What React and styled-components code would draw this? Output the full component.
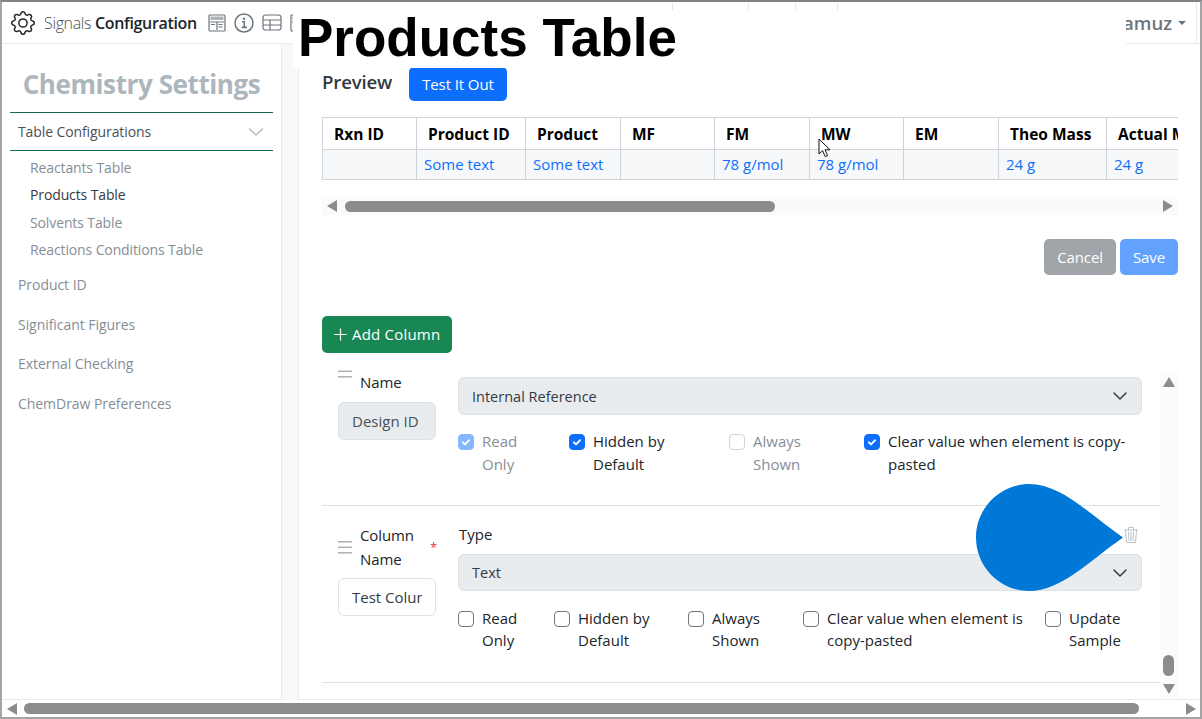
import React from 'react';
import styled, { createGlobalStyle } from 'styled-components';
import { ChevronDown, Plus } from 'lucide-react';
import { BsGear, BsTrash3 } from 'react-icons/bs';

const Global = createGlobalStyle`
  html, body { margin: 0; padding: 0; background: #fff; }
  body { font-family: "Open Sans", "Noto Sans", sans-serif; font-size: 15px; color: #212529; }
  * { box-sizing: border-box; }
`;

const Frame = styled.div`
  position: relative;
  width: 1202px;
  height: 719px;
  display: flex;
  flex-direction: column;
  overflow: hidden;
  background: #fff;
  border-top: 2px solid #7f8386;
  border-left: 2px solid #a3a5a7;
  border-right: 2px solid #a3a5a7;
  border-bottom: 2px solid #a3a5a7;
`;

const Header = styled.header`
  height: 42px;
  flex: none;
  display: flex;
  align-items: center;
  padding-left: 9px;
  border-bottom: 1px solid #e9ecef;
  color: #212529;
`;

const Brand = styled.div`
  margin-left: 9px;
  font-size: 16px;
  letter-spacing: -0.35px;
  color: #495057;
  font-weight: 300;
  b { color: #212529; font-weight: 600; }
`;

const IconRow = styled.div`
  display: flex;
  align-items: center;
  gap: 8px;
  margin-left: 11px;
  color: #6c757d;
`;

const UserMenu = styled.div`
  margin-left: auto;
  margin-right: 3px;
  padding-right: 10px;
  align-self: stretch;
  display: flex;
  align-items: center;
  gap: 6px;
  font-size: 18.5px;
  font-weight: 600;
  color: #6c757d;
  border-right: 1px solid #e9ecef;
  &::after {
    content: '';
    border-top: 4px solid #6c757d;
    border-left: 4px solid transparent;
    border-right: 4px solid transparent;
  }
`;

const TitleOverlay = styled.div`
  position: absolute;
  left: 291px;
  top: -2px;
  width: 833px;
  height: 68px;
  padding-left: 5px;
  background: #fff;
  font-family: "Liberation Sans", Arial, sans-serif;
  font-weight: 700;
  font-size: 53px;
  line-height: 76px;
  color: #000;
`;

const Tick = styled.span`
  position: absolute;
  top: 2px;
  left: ${p => p.$x}px;
  width: 1px;
  height: 6px;
  background: #e3e4e6;
`;

const Body = styled.div`
  flex: 1;
  min-height: 0;
  display: flex;
`;

const Sidebar = styled.aside`
  width: 280px;
  flex: none;
  padding: 0 8px;
  border-right: 1px solid #e9ecef;
  border-bottom: 1px solid #e9ecef;
`;

const SideTitle = styled.h1`
  margin: 22px 0 10px;
  text-align: center;
  font-size: 26px;
  line-height: 36px;
  font-weight: 700;
  letter-spacing: -0.4px;
  color: #adb5bd;
`;

const AccordionHead = styled.div`
  height: 39px;
  padding: 0 4px 0 8px;
  display: flex;
  align-items: center;
  justify-content: space-between;
  border-top: 1px solid #146c43;
  border-bottom: 1px solid #146c43;
  font-size: 14px;
  letter-spacing: -0.1px;
  color: #495057;
  svg { color: #adb5bd; }
`;

const SubList = styled.div`
  padding: 3px 0 0 20px;
  margin-bottom: 2px;
`;

const SubItem = styled.div`
  height: 27.3px;
  line-height: 27px;
  font-size: 14px;
  letter-spacing: -0.12px;
  color: ${p => (p.$active ? '#343a40' : '#868e96')};
`;

const SideLink = styled.div`
  height: 39.6px;
  line-height: 39px;
  padding-left: 8px;
  font-size: 14px;
  letter-spacing: -0.05px;
  color: #868e96;
`;

const Gutter = styled.div`
  width: 16px;
  flex: none;
  background: #f8f9fa;
`;

const Main = styled.main`
  flex: 1;
  min-width: 0;
  padding: 23px 22px 0 23px;
  display: flex;
  flex-direction: column;
  border-left: 1px solid #e9ecef;
  border-bottom: 1px solid #e9ecef;
`;

const PreviewRow = styled.div`
  display: flex;
  align-items: flex-start;
  gap: 17px;
  height: 50px;
`;

const PreviewTitle = styled.h2`
  margin: 0;
  font-size: 18.7px;
  line-height: 29px;
  font-weight: 600;
  letter-spacing: -0.2px;
  color: #343a40;
`;

const Btn = styled.button`
  height: ${p => p.$h || 34}px;
  padding: 0 ${p => p.$px || 13}px 1px;
  border: 0;
  border-radius: 5px;
  font: inherit;
  font-size: 15px;
  letter-spacing: -0.1px;
  color: #fff;
  background: ${p => p.$bg};
  display: inline-flex;
  align-items: center;
  justify-content: center;
  gap: 2px;
  svg { margin-left: -3px; }
`;

const AddBtn = styled(Btn)`
  letter-spacing: 0.2px;
`;

const TableClip = styled.div`
  overflow: hidden;
  height: 63px;
`;

const PreviewTable = styled.table`
  border-collapse: collapse;
  table-layout: fixed;
  width: 904px;
  font-size: 15px;
  th, td {
    border: 1px solid #ced4da;
    text-align: left;
    white-space: nowrap;
    overflow: hidden;
  }
  th { height: 32px; padding: 0 0 0 11px; font-size: 15.5px; font-weight: 700; color: #000; }
  td { height: 30px; padding: 0 0 2px 7px; background: #f7f8fa; color: #0d6efd; }
`;

const Col = styled.col`
  width: ${p => p.$w}px;
`;

const HScroll = styled.div`
  height: 18px;
  margin-top: 17px;
  background: #fafafa;
  display: flex;
  align-items: center;
  padding: 0 5px;
  gap: 8px;
`;

const Thumb = styled.div`
  height: 11px;
  border-radius: 6px;
  background: #8c8c8c;
  width: ${p => p.$w}px;
`;

const Arrow = styled.span`
  flex: none;
  width: 0;
  height: 0;
  border-style: solid;
  border-color: transparent;
  ${p => p.$dir === 'left' && 'border-width: 6px 10px 6px 0; border-right-color: #8c8c8c;'}
  ${p => p.$dir === 'right' && 'border-width: 6px 0 6px 10px; border-left-color: #8c8c8c; margin-left: auto;'}
  ${p => p.$dir === 'up' && 'border-width: 0 6.5px 10px 6.5px; border-bottom-color: #8c8c8c;'}
  ${p => p.$dir === 'down' && 'border-width: 10px 6.5px 0 6.5px; border-top-color: #8c8c8c;'}
`;

const ActionRow = styled.div`
  display: flex;
  justify-content: flex-end;
  gap: 4px;
  margin-top: 24px;
  margin-bottom: 41px;
`;

const AddRow = styled.div`
  margin-bottom: 17px;
`;

const ListPanel = styled.div`
  flex: 1;
  min-height: 0;
  display: flex;
  overflow: hidden;
`;

const Rows = styled.div`
  width: 838px;
  flex: none;
`;

const ColumnRow = styled.section`
  height: ${p => p.$h}px;
  padding: ${p => p.$top}px 18px 0 16px;
  display: flex;
  border-bottom: 1px solid #dee2e6;
`;

const NameCol = styled.div`
  width: 98px;
  flex: none;
  margin-right: 22px;
`;

const NameLabelRow = styled.div`
  display: flex;
  align-items: ${p => (p.$top ? 'flex-start' : 'center')};
  height: ${p => p.$h}px;
  margin-bottom: ${p => p.$mb}px;
  line-height: 24px;
  font-size: 15px;
  letter-spacing: -0.1px;
`;

const DragHandle = styled.svg`
  flex: none;
  margin-right: 8px;
  margin-top: ${p => p.$mt || 0}px;
  color: #adb5bd;
`;

const LabelText = styled.span`
  flex: 1;
`;

const Required = styled.span`
  color: #dc3545;
  font-size: 13px;
  margin-right: -1px;
`;

const TextInput = styled.div`
  height: 37.5px;
  padding: 0 13px;
  line-height: 36px;
  border: 1px solid #dee2e6;
  border-radius: 6px;
  font-size: 15px;
  color: ${p => (p.$disabled ? '#495057' : '#343a40')};
  background: ${p => (p.$disabled ? '#e9ecef' : '#fff')};
`;

const InputValue = styled.span`
  display: block;
  white-space: nowrap;
  overflow: hidden;
`;

const FieldCol = styled.div`
  flex: 1;
  min-width: 0;
  position: relative;
`;

const TypeLabel = styled.div`
  font-size: 15px;
  line-height: 20px;
  padding-left: 1px;
  margin-bottom: 10px;
`;

const SelectBox = styled.div`
  height: ${p => p.$h}px;
  margin-top: ${p => p.$mt || 0}px;
  display: flex;
  align-items: center;
  justify-content: space-between;
  padding: 0 9px 0 13px;
  background: #e9ecef;
  border: 1px solid #dee2e6;
  border-radius: 6px;
  font-size: 14.5px;
  color: #343a40;
  svg { color: #343a40; }
`;

const ChecksRow = styled.div`
  display: flex;
  margin-top: ${p => p.$mt}px;
`;

const CheckItem = styled.div`
  width: ${p => p.$w}px;
  flex: none;
  display: flex;
  align-items: flex-start;
  gap: 8px;
  font-size: 15px;
  line-height: ${p => p.$lh || 23}px;
  color: ${p => (p.$muted ? '#868e96' : '#212529')};
`;

const Box = styled.span`
  width: 16px;
  height: 16px;
  flex: none;
  margin-top: 4px;
  border-radius: 4px;
  display: flex;
  align-items: center;
  justify-content: center;
  border: 1px solid ${p => (p.$checked ? (p.$dim ? '#86b7fe' : '#0d6efd') : p.$dim ? '#ced4da' : '#6c757d')};
  background: ${p => (p.$checked ? (p.$dim ? '#86b7fe' : '#0d6efd') : '#fff')};
`;

const TrashSlot = styled.div`
  position: absolute;
  right: 3px;
  top: 3px;
  color: #b8bfc6;
  display: flex;
`;

const VScroll = styled.div`
  width: 18px;
  flex: none;
  background: #fcfcfc;
  display: flex;
  flex-direction: column;
  align-items: center;
  padding: 7px 1px 5px 0;
`;

const VThumb = styled.div`
  width: 11px;
  height: 21px;
  border-radius: 6px;
  background: #8c8c8c;
  margin-top: auto;
  margin-bottom: 8px;
`;

const PageScroll = styled.div`
  height: 17px;
  flex: none;
  display: flex;
  align-items: center;
  padding: 0 4px 0 5px;
  gap: 7px;
`;

const Teardrop = styled.svg`
  position: absolute;
  left: 974px;
  top: 482px;
`;

const Cursor = styled.svg`
  position: absolute;
  left: 816px;
  top: 136px;
`;

const check = (
  <svg width="10" height="10" viewBox="0 0 16 16" fill="none">
    <path d="M3 8.5l3.4 3.4L13 5" stroke="#fff" strokeWidth="3" strokeLinecap="round" strokeLinejoin="round" />
  </svg>
);

const Check = ({ w, checked, dim, muted, lh, children }) => (
  <CheckItem $w={w} $muted={muted} $lh={lh}>
    <Box $checked={checked} $dim={dim}>{checked && check}</Box>
    <span>{children}</span>
  </CheckItem>
);

const Handle = ({ mt }) => (
  <DragHandle $mt={mt} width="14" height="13" viewBox="0 0 14 13" fill="currentColor">
    <rect y="0" width="14" height="1.6" />
    <rect y="5.5" width="14" height="1.6" />
    <rect y="11" width="14" height="1.6" />
  </DragHandle>
);

const PanelIcon = () => (
  <svg width="18" height="18" viewBox="0 0 18 18" fill="none" stroke="currentColor" strokeWidth="1.2">
    <rect x="1" y="1" width="16" height="16" rx="1" />
    <rect x="2.5" y="2.5" width="13" height="3.5" fill="currentColor" stroke="none" opacity=".55" />
    <path d="M2 8h14M9 8v8M10.5 10.5h4M10.5 13h4M3 10.5h4" />
  </svg>
);

const InfoIcon = () => (
  <svg width="20" height="20" viewBox="0 0 20 20" fill="none" stroke="currentColor">
    <circle cx="10" cy="10" r="9" strokeWidth="1.5" />
    <path d="M8 8.800h2.300v5.400M7.800 14.400h5" strokeWidth="1.6" />
    <circle cx="10" cy="5.800" r="1.200" fill="currentColor" stroke="none" />
  </svg>
);

const GridIcon = () => (
  <svg width="20" height="17" viewBox="0 0 20 17" fill="none" stroke="currentColor" strokeWidth="1.2">
    <rect x="1" y="1" width="18" height="15" rx="2.5" />
    <path d="M1 6h18M1 11h18M8 6v10" />
  </svg>
);

const columns = [94, 109, 95, 94, 95, 94, 95, 108, 120];

const headers = ['Rxn ID', 'Product ID', 'Product', 'MF', 'FM', 'MW', 'EM', 'Theo Mass', 'Actual Mass'];
const cells = ['', 'Some text', 'Some text', '', '78 g/mol', '78 g/mol', '', '24 g', '24 g'];
const ticks = [670, 746, 793, 835];

export default function App() {
  return (
    <>
      <Global />
      <Frame>
        <Header>
          <BsGear size={24} />
          <Brand>Signals <b>Configuration</b></Brand>
          <IconRow>
            <PanelIcon />
            <InfoIcon />
            <GridIcon />
            <PanelIcon />
          </IconRow>
          <UserMenu>amuz</UserMenu>
        </Header>
        <Body>
          <Sidebar>
            <SideTitle>Chemistry Settings</SideTitle>
            <AccordionHead>
              Table Configurations
              <ChevronDown size={26} strokeWidth={1} />
            </AccordionHead>
            <SubList>
              <SubItem>Reactants Table</SubItem>
              <SubItem $active>Products Table</SubItem>
              <SubItem>Solvents Table</SubItem>
              <SubItem>Reactions Conditions Table</SubItem>
            </SubList>
            <SideLink>Product ID</SideLink>
            <SideLink>Significant Figures</SideLink>
            <SideLink>External Checking</SideLink>
            <SideLink>ChemDraw Preferences</SideLink>
          </Sidebar>
          <Gutter />
          <Main>
            <PreviewRow>
              <PreviewTitle>Preview</PreviewTitle>
              <Btn $bg="#0d6efd">Test It Out</Btn>
            </PreviewRow>
            <TableClip>
              <PreviewTable>
                <colgroup>
                  {columns.map((w, i) => <Col key={i} $w={w} />)}
                </colgroup>
                <thead>
                  <tr>{headers.map(h => <th key={h}>{h}</th>)}</tr>
                </thead>
                <tbody>
                  <tr>{cells.map((c, i) => <td key={i}>{c}</td>)}</tr>
                </tbody>
              </PreviewTable>
            </TableClip>
            <HScroll>
              <Arrow $dir="left" />
              <Thumb $w={430} />
              <Arrow $dir="right" />
            </HScroll>
            <ActionRow>
              <Btn $bg="#a1a5aa" $h={36}>Cancel</Btn>
              <Btn $bg="#62a1fe" $h={36}>Save</Btn>
            </ActionRow>
            <AddRow>
              <AddBtn $bg="#198754" $h={37} $px={12}>
                <Plus size={19} strokeWidth={1.5} />
                Add Column
              </AddBtn>
            </AddRow>
            <ListPanel>
              <Rows>
                <ColumnRow $h={136} $top={0}>
                  <NameCol>
                    <NameLabelRow $top $h={32} $mb={0}>
                      <Handle mt={-5} />
                      <LabelText>Name</LabelText>
                    </NameLabelRow>
                    <TextInput $disabled><InputValue>Design ID</InputValue></TextInput>
                  </NameCol>
                  <FieldCol>
                    <SelectBox $h={38} $mt={7}>
                      Internal Reference
                      <ChevronDown size={24} strokeWidth={1.5} />
                    </SelectBox>
                    <ChecksRow $mt={15}>
                      <Check w={111} checked dim muted>Read<br />Only</Check>
                      <Check w={160} checked>Hidden by<br />Default</Check>
                      <Check w={135} dim muted>Always<br />Shown</Check>
                      <Check w={278} checked>Clear value when element is copy-<br />pasted</Check>
                    </ChecksRow>
                  </FieldCol>
                </ColumnRow>
                <ColumnRow $h={177} $top={18}>
                  <NameCol>
                    <NameLabelRow $h={46} $mb={8}>
                      <Handle />
                      <LabelText>Column<br />Name</LabelText>
                      <Required>*</Required>
                    </NameLabelRow>
                    <TextInput><InputValue>Test Column</InputValue></TextInput>
                  </NameCol>
                  <FieldCol>
                    <TrashSlot><BsTrash3 size={16} /></TrashSlot>
                    <TypeLabel>Type</TypeLabel>
                    <SelectBox $h={37}>
                      Text
                      <ChevronDown size={24} strokeWidth={1.5} />
                    </SelectBox>
                    <ChecksRow $mt={16}>
                      <Check w={96} lh={22}>Read<br />Only</Check>
                      <Check w={134} lh={22}>Hidden by<br />Default</Check>
                      <Check w={115} lh={22}>Always<br />Shown</Check>
                      <Check w={242} lh={22}>Clear value when element is<br />copy-pasted</Check>
                      <Check w={100} lh={22}>Update<br />Sample</Check>
                    </ChecksRow>
                  </FieldCol>
                </ColumnRow>
              </Rows>
              <VScroll>
                <Arrow $dir="up" />
                <VThumb />
                <Arrow $dir="down" />
              </VScroll>
            </ListPanel>
          </Main>
        </Body>
        <PageScroll>
          <Arrow $dir="left" />
          <Thumb $w={1115} />
          <Arrow $dir="right" />
        </PageScroll>
        <TitleOverlay>Products Table</TitleOverlay>
        {ticks.map(x => <Tick key={x} $x={x} />)}
        <Cursor width="14" height="22" viewBox="0 0 14 22">
          <path d="M1 1v15l3.6-3.4 2.6 6 2.4-1-2.6-5.8H12L1 1z" fill="#fff" stroke="#111" strokeWidth="1" />
        </Cursor>
        <Teardrop width="148" height="108" viewBox="0 0 148 108">
          <path d="M0 53.500C0 24 24 0 53 0C85 0 112 29 147 53.500C112 78 85 107 53 107C24 107 0 83 0 53.500z" fill="#0078d7" />
        </Teardrop>
      </Frame>
    </>
  );
}
